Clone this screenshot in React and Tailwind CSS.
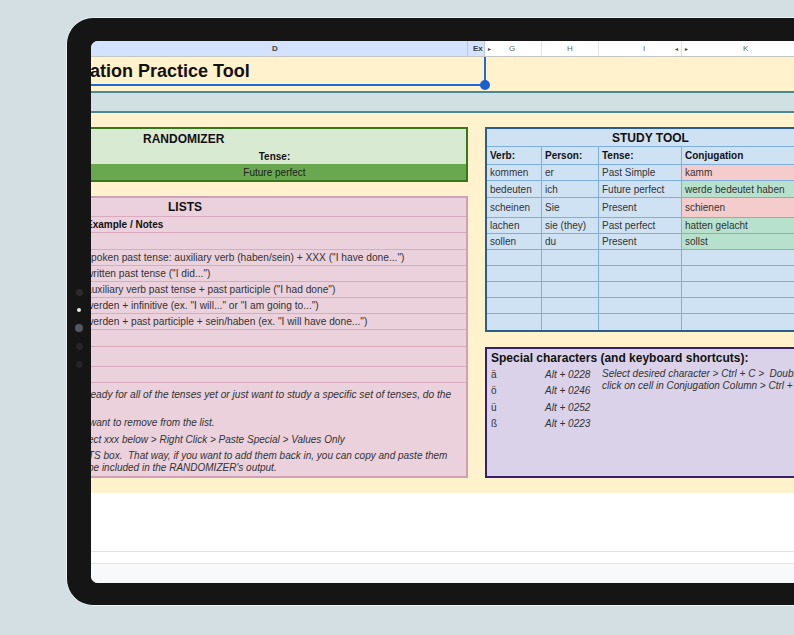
import React from "react";

const verbs = [
  { verb: "kommen", person: "er", tense: "Past Simple", conj: "kamm", ok: false, h: "h-[16px]" },
  { verb: "bedeuten", person: "ich", tense: "Future perfect", conj: "werde bedeutet haben", ok: true, h: "h-[17px]" },
  { verb: "scheinen", person: "Sie", tense: "Present", conj: "schienen", ok: false, h: "h-[20px]" },
  { verb: "lachen", person: "sie (they)", tense: "Past perfect", conj: "hatten gelacht", ok: true, h: "h-[16px]" },
  { verb: "sollen", person: "du", tense: "Present", conj: "sollst", ok: true, h: "h-[16px]" },
];

const tenseNotes = [
  "spoken past tense: auxiliary verb (haben/sein) + XXX (\"I have done...\")",
  "written past tense (\"I did...\")",
  "auxiliary verb past tense + past participle (\"I had done\")",
  "werden + infinitive (ex. \"I will...\" or \"I am going to...\")",
  "werden + past participle + sein/haben (ex. \"I will have done...\")",
];

const specials = [
  ["ä", "Alt + 0228"],
  ["ö", "Alt + 0246"],
  ["ü", "Alt + 0252"],
  ["ß", "Alt + 0223"],
];

function ColumnHeader() {
  return (
    <div className="flex h-[16px] shrink-0 border-b border-[#c4c7c5] text-[8px] leading-none text-[#5f6368]">
      <div className="w-[377px] flex items-center pl-[181px] bg-[#d3e3fd] border-r border-[#c4c7c5] font-bold text-[#3c4043]">
        D
      </div>
      <div className="w-[17px] flex items-center pl-[5px] overflow-hidden whitespace-nowrap bg-[#d3e3fd] border-r border-[#c4c7c5] font-bold text-[#3c4043]">
        Ex
      </div>
      <div className="w-[57px] flex items-center bg-white border-r border-[#e1e3e1]">
        <span className="pl-[3px] text-[6px] text-[#444]">▸</span>
        <span className="flex-1 text-center pr-[8px]">G</span>
      </div>
      <div className="w-[57px] flex items-center justify-center bg-white border-r border-[#e1e3e1]">
        H
      </div>
      <div className="w-[83px] flex items-center bg-white border-r border-[#e1e3e1]">
        <span className="flex-1 text-center pl-[14px]">I</span>
        <span className="pr-[3px] text-[6px] text-[#444]">◂</span>
      </div>
      <div className="flex-1 flex items-center bg-white">
        <span className="pl-[3px] text-[6px] text-[#444]">▸</span>
        <span className="pl-[55px]">K</span>
      </div>
    </div>
  );
}

function Randomizer() {
  return (
    <div className="h-[55px] flex flex-col border-2 border-l-0 border-[#38761d] bg-[#d9ead3] text-[#111]">
      <div className="h-[20px] flex items-center pl-[52px] text-[12px] font-bold">RANDOMIZER</div>
      <div className="h-[15px] flex items-center justify-center pr-[8px] text-[10px] font-bold">Tense:</div>
      <div className="flex-1 flex items-center justify-center pr-[8px] bg-[#6aa84f] text-[10px] text-[#1d1d1d]">
        Future perfect
      </div>
    </div>
  );
}

function Lists() {
  const row = "flex items-center whitespace-nowrap border-b border-[#d9a9c0]";
  return (
    <div className="flex-1 flex flex-col border-2 border-l-0 border-[#d29fb8] bg-[#ead1dc] text-[#333] text-[10px] overflow-hidden">
      <div className={`${row} h-[19px] pl-[77px] text-[12px] font-bold text-[#111]`}>LISTS</div>
      <div className={`${row} h-[16px] font-bold text-[#111]`}>
        <span className="ml-[-5px]">Example / Notes</span>
      </div>
      <div className={`${row} h-[17px]`} />
      {tenseNotes.map((t) => (
        <div key={t} className={`${row} h-[16px]`}>
          <span className="ml-[-5px] text-[10.2px]">{t}</span>
        </div>
      ))}
      <div className={`${row} h-[17px]`} />
      <div className={`${row} h-[20px]`} />
      <div className={`${row} h-[16px]`} />
      <div className="flex-1 flex flex-col italic whitespace-nowrap leading-[12px] pt-[6px]">
        <div className="ml-[-4px] text-[10.2px]">ready for all of the tenses yet or just want to study a specific set of tenses, do the</div>
        <div className="mt-[16px] ml-[-2px]">want to remove from the list.</div>
        <div className="mt-[5px] ml-[-3px]">ect xxx below &gt; Right Click &gt; Paste Special &gt; Values Only</div>
        <div className="mt-[4px] ml-[-3px]">TS box.&nbsp; That way, if you want to add them back in, you can copy and paste them</div>
        <div className="ml-[-3px]">be included in the RANDOMIZER's output.</div>
      </div>
    </div>
  );
}

function StudyTool() {
  const cell = "flex items-center pl-[3px] border-r border-[#7eaedb] whitespace-nowrap overflow-hidden";
  const grid = "grid grid-cols-[55px_57px_83px_1fr] border-b border-[#7eaedb]";
  return (
    <div className="h-[205px] flex flex-col border-2 border-r-0 border-[#2b5d8f] bg-[#cfe2f3] text-[10px] text-[#333] overflow-hidden">
      <div className="h-[18px] shrink-0 flex items-center pl-[125px] border-b border-[#7eaedb] text-[12px] font-bold text-[#111]">
        STUDY TOOL
      </div>
      <div className={`${grid} h-[18px] font-bold text-[#111]`}>
        <div className={cell}>Verb:</div>
        <div className={cell}>Person:</div>
        <div className={cell}>Tense:</div>
        <div className={cell}>Conjugation</div>
      </div>
      {verbs.map((v) => (
        <div key={v.verb} className={`${grid} ${v.h}`}>
          <div className={cell}>{v.verb}</div>
          <div className={cell}>{v.person}</div>
          <div className={cell}>{v.tense}</div>
          <div className={`${cell} ${v.ok ? "bg-[#b7e1cd]" : "bg-[#f4cccc]"}`}>{v.conj}</div>
        </div>
      ))}
      {[0, 1, 2, 3, 4].map((i) => (
        <div key={i} className={`${grid} h-[16px] last:border-b-0`}>
          <div className={cell} />
          <div className={cell} />
          <div className={cell} />
          <div className={cell} />
        </div>
      ))}
    </div>
  );
}

function SpecialCharacters() {
  return (
    <div className="flex-1 flex flex-col border-2 border-r-0 border-[#35206f] bg-[#d9d2e9] text-[10px] text-[#333] whitespace-nowrap overflow-hidden">
      <div className="h-[17px] flex items-center pl-[4px] text-[12px] font-bold text-[#111]">
        Special characters (and keyboard shortcuts):
      </div>
      <div className="flex">
        <div className="w-[58px] pl-[4px] flex flex-col">
          {specials.map(([c]) => (
            <div key={c} className="h-[16.5px] flex items-center">{c}</div>
          ))}
        </div>
        <div className="w-[57px] flex flex-col italic">
          {specials.map(([c, code]) => (
            <div key={c} className="h-[16.5px] flex items-center">{code}</div>
          ))}
        </div>
        <div className="flex-1 italic leading-[12px] pt-[2px]">
          <div>Select desired character &gt; Ctrl + C &gt;&nbsp; Double</div>
          <div>click on cell in Conjugation Column &gt; Ctrl + V</div>
        </div>
      </div>
    </div>
  );
}

function Sheet() {
  return (
    <div className="flex-1 flex flex-col rounded-l-[7px] overflow-hidden bg-white">
      <ColumnHeader />
      <div className="shrink-0 flex flex-col bg-[#fff2cc]">
        <div className="h-[29px] flex">
          <div className="relative w-[395px] flex items-center pt-[2px] border-b-2 border-r-2 border-[#1f69d6]">
            <span className="ml-[-1px] text-[18px] font-bold text-[#111] whitespace-nowrap">ation Practice Tool</span>
            <span className="absolute -right-[6px] -bottom-[6px] w-[10px] h-[10px] rounded-full bg-[#1a5fd0]" />
          </div>
        </div>
        <div className="h-[5px]" />
        <div className="h-[22px] border-y-2 border-[#4d8792] bg-[#d0e0e3]" />
        <div className="h-[380px] flex pt-[14px] pb-[15px]">
          <div className="w-[377px] flex flex-col gap-[14px]">
            <Randomizer />
            <Lists />
          </div>
          <div className="flex-1 ml-[17px] flex flex-col gap-[15px]">
            <StudyTool />
            <SpecialCharacters />
          </div>
        </div>
      </div>
      <div className="h-[59px] shrink-0 bg-white border-b border-[#e3e3e3]" />
      <div className="h-[12px] shrink-0 bg-white border-b border-[#e3e6e8]" />
      <div className="flex-1 bg-[#f7f9fa]" />
    </div>
  );
}

export default function App() {
  const dots = [
    "w-[7px] h-[7px] bg-[#2a2a2a]",
    "w-[4px] h-[4px] bg-[#e9e9e9]",
    "w-[8px] h-[8px] bg-[#55595e]",
    "w-[7px] h-[7px] bg-[#262626]",
    "w-[7px] h-[7px] bg-[#242424]",
  ];
  return (
    <div className="w-[794px] h-[635px] overflow-hidden bg-[#d3dfe2] pl-[66px] pt-[17px] font-['Liberation_Sans',Arial,sans-serif]">
      <div className="w-[760px] h-[589px] flex rounded-l-[27px] border border-r-0 border-[#eef2f3] bg-[#151515] pt-[23px] pb-[22px]">
        <div className="w-[24px] shrink-0 flex flex-col items-center pt-[242px]">
          {dots.map((d, i) => (
            <div key={i} className="h-[18px] flex items-center justify-center">
              <span className={`rounded-full ${d}`} />
            </div>
          ))}
        </div>
        <Sheet />
      </div>
    </div>
  );
}
